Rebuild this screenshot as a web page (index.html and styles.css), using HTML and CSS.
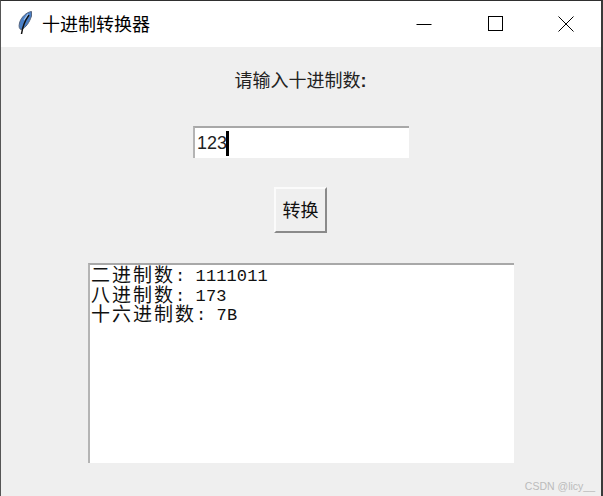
FILE: index.html
```html
<!DOCTYPE html>
<html lang="zh">
<head>
<meta charset="utf-8">
<title>十进制转换器</title>
<link rel="stylesheet" href="styles.css">
</head>
<body>
<div class="window">
  <header class="titlebar">
    <svg class="feather" width="16" height="26" viewBox="0 0 16 26">
      <path d="M14.500 1.500C10 2 4 7 2.500 13C1.500 17 2.500 19 4 19.500C9 18 12.500 12 14.500 6Z" fill="#4a80c8" stroke="#56657e" stroke-width="1"/>
      <path d="M12 5C9 9 6 14 4.500 24" fill="none" stroke="#111" stroke-width="1.500"/>
      <path d="M11 4L7 10" stroke="#a4c4ea" stroke-width="1.200"/>
    </svg>
    <span class="title">十进制转换器</span>
    <div class="controls">
      <svg class="ctl" width="16" height="16" viewBox="0 0 16 16"><path d="M0.500 8.500H15.500" stroke="#000" fill="none"/></svg>
      <svg class="ctl" width="16" height="16" viewBox="0 0 16 16"><rect x="1.500" y="0.500" width="14" height="14" stroke="#000" fill="none"/></svg>
      <svg class="ctl" width="16" height="16" viewBox="0 0 16 16"><path d="M0.500 0.500L15.500 15.500M15.500 0.500L0.500 15.500" stroke="#000" fill="none"/></svg>
    </div>
  </header>
  <main class="content">
    <div class="prompt">请输入十进制数<span class="colon">:</span></div>
    <div class="entry"><span>123</span><i class="caret"></i></div>
    <button class="convert" type="button">转换</button>
    <div class="output">
      <div class="line"><span class="han">二进制数</span>: 1111011</div>
      <div class="line"><span class="han">八进制数</span>: 173</div>
      <div class="line"><span class="han">十六进制数</span>: 7B</div>
    </div>
    <div class="mark">CSDN @licy__</div>
  </main>
</div>
</body>
</html>
```
FILE: styles.css
```css
* { box-sizing: border-box; }
html, body { margin: 0; height: 100%; }
body { background: #efefef; overflow: hidden; font-family: "Noto Sans CJK SC", "Liberation Sans", sans-serif; }
.window {
  width: 603px;
  height: 496px;
  display: flex;
  flex-direction: column;
  border-top: 1px solid #2f2f2f;
  border-left: 1px solid #555;
  border-right: 2px solid #3a3a3a;
  background: #efefef;
}
.titlebar {
  height: 46px;
  flex: none;
  background: #fff;
  display: flex;
  align-items: center;
  padding-left: 16px;
}
.feather { margin-top: -2px; }
.title {
  margin-left: 9px;
  font-size: 18px;
  line-height: 24px;
  color: #000;
  margin-top: -2px;
}
.controls {
  margin-left: auto;
  display: flex;
  gap: 55px;
  padding-right: 27px;
  margin-top: -1px;
}
.ctl { display: block; }
.content {
  position: relative;
  flex: 1;
  display: flex;
  flex-direction: column;
  align-items: center;
  padding-top: 20px;
}
.prompt {
  height: 25px;
  font-size: 18px;
  line-height: 25px;
  color: #222;
  margin-left: -1px;
}
.colon { font-family: "Liberation Sans", sans-serif; font-weight: 700; margin-left: 0; }
.entry {
  margin-top: 34px;
  width: 216px;
  height: 32px;
  background: #fff;
  border-top: 2px solid #a8a8a8;
  border-left: 2px solid #b4b4b4;
  display: flex;
  align-items: center;
  padding-left: 2px;
  font-family: "Liberation Sans", sans-serif;
  font-size: 18px;
  color: #222;
}
.caret { width: 3px; height: 25px; background: #000; margin-left: -1px; }
.convert {
  margin-top: 29px;
  width: 53px;
  height: 46px;
  margin-left: -1px;
  padding: 0 0 2px;
  font-family: inherit;
  font-size: 18px;
  color: #111;
  background: #efefef;
  border: 2px solid;
  border-color: #fbfbfb #8a8a8a #8a8a8a #fbfbfb;
}
.output {
  margin-top: 30px;
  width: 426px;
  height: 200px;
  background: #fff;
  border-top: 2px solid #a8a8a8;
  border-left: 2px solid #b4b4b4;
  padding-left: 1px;
  font-family: "Liberation Mono", monospace;
  font-size: 17px;
  letter-spacing: 0.100px;
  color: #111;
}
.line { height: 19.700px; line-height: 18px; white-space: pre; }
.han { font-family: "Noto Sans CJK SC", sans-serif; font-size: 19px; letter-spacing: 2px; vertical-align: -1px; }
.mark {
  position: absolute;
  right: 6px;
  bottom: 4px;
  font-family: "Liberation Sans", sans-serif;
  font-size: 10.500px;
  color: #bbb;
}
```
